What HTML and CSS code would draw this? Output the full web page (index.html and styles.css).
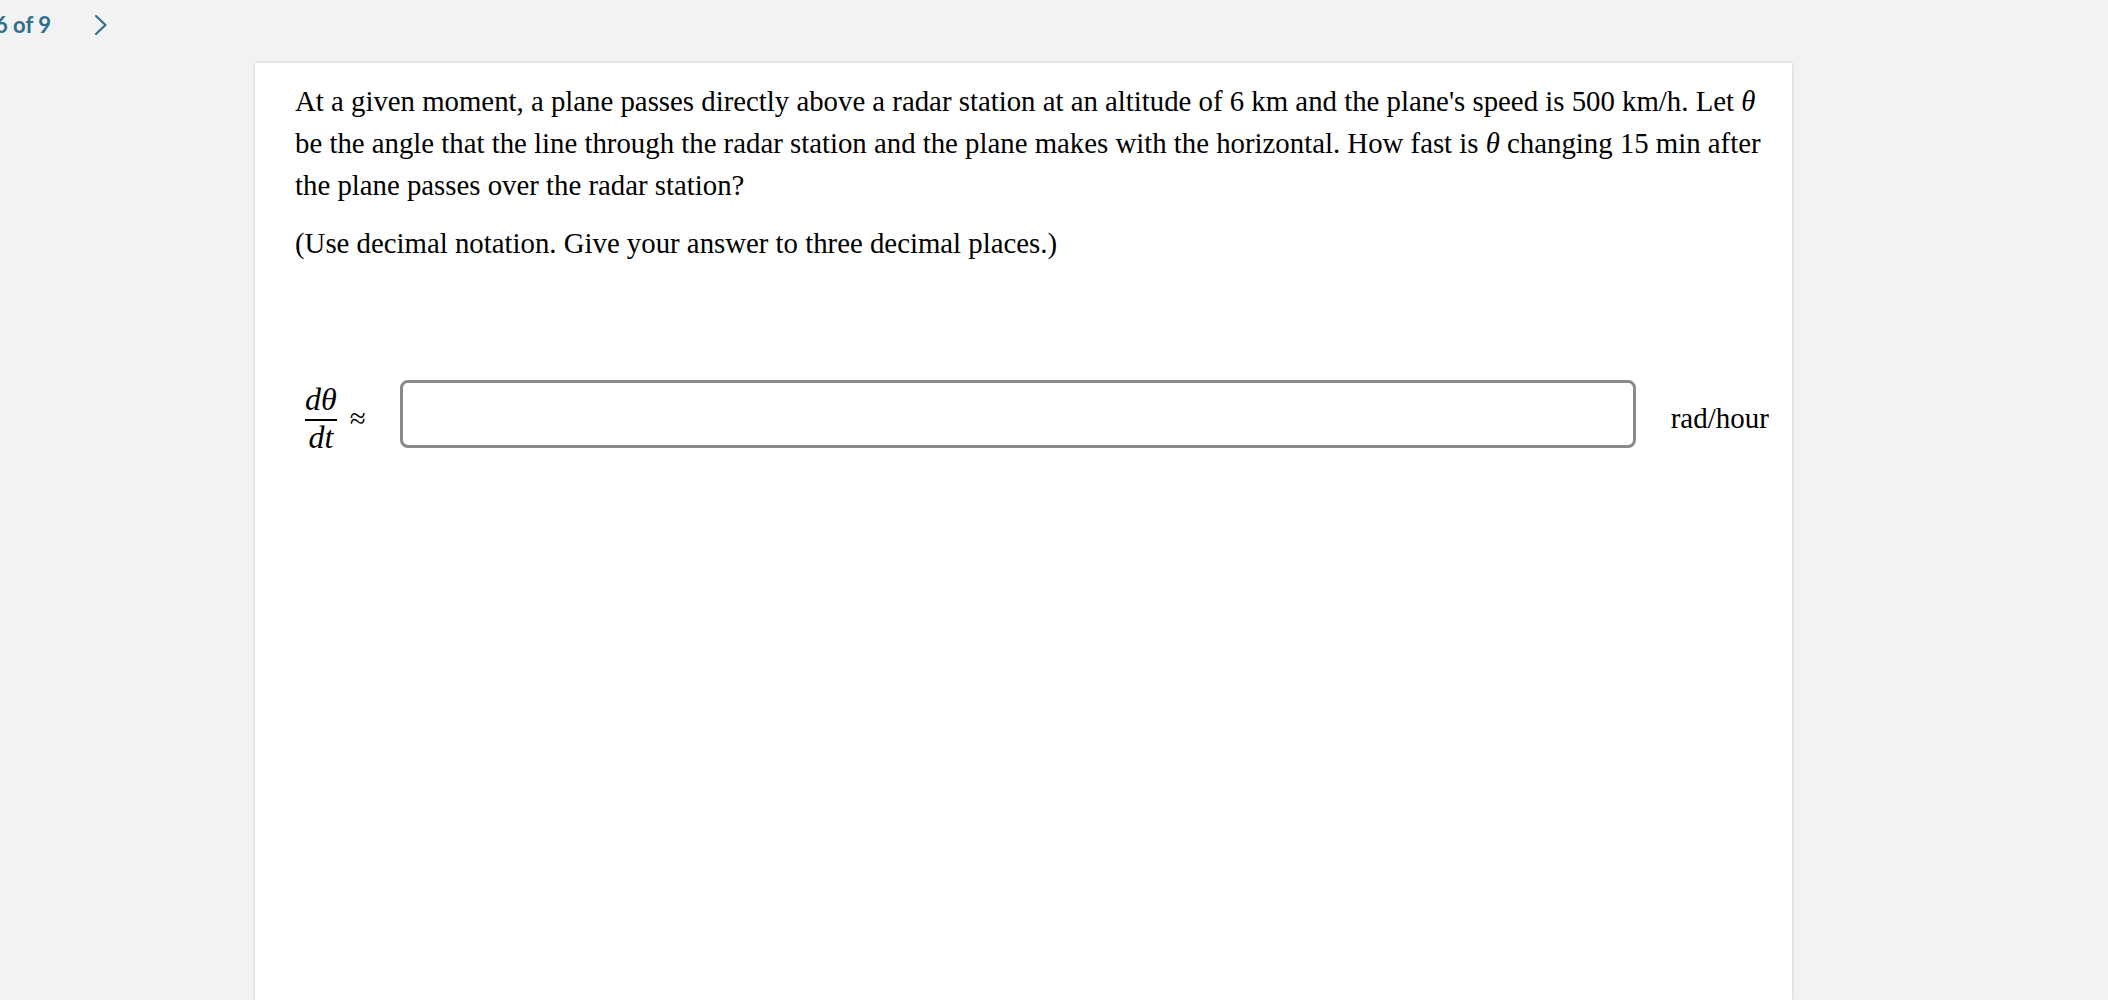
FILE: index.html
```html
<!DOCTYPE html>
<html lang="en">
<head>
<meta charset="utf-8">
<title>Question 6 of 9</title>
<link rel="stylesheet" href="styles.css">
</head>
<body>
<header class="topbar">
  <span class="counter">6 of 9</span>
  <button class="next" aria-label="Next question">
    <svg width="14" height="22" viewBox="0 0 14 22"><path d="M2 2 L11.5 11 L2 20" fill="none" stroke="#2e6f8c" stroke-width="2.2" stroke-linecap="round" stroke-linejoin="round"/></svg>
  </button>
</header>
<main class="card">
  <p class="question">At a given moment, a plane passes directly above a radar station at an altitude of 6 km and the plane's speed is 500 km/h. Let <i class="var">θ</i> be the angle that the line through the radar station and the plane makes with the horizontal. How fast is <i class="var">θ</i> changing 15 min after the plane passes over the radar station?</p>
  <p class="question">(Use decimal notation. Give your answer to three decimal places.)</p>
  <div class="answer-row">
    <span class="frac"><span class="num">dθ</span><span class="den">dt</span></span>
    <span class="approx">≈</span>
    <input class="answer" type="text" aria-label="answer">
    <span class="unit">rad/hour</span>
  </div>
</main>
</body>
</html>
```
FILE: styles.css
```css
html, body {
  margin: 0;
  padding: 0;
}
body {
  background: #f2f2f2;
  width: 2108px;
  height: 1000px;
  overflow: hidden;
}
.topbar {
  box-sizing: border-box;
  height: 63px;
  padding-top: 12px;
  display: flex;
  align-items: flex-start;
}
.counter {
  margin-left: -5px;
  font-family: "Lato", "Open Sans", sans-serif;
  font-weight: 700;
  font-size: 22px;
  line-height: 26px;
  color: #2e6f8c;
}
.next {
  margin-left: 43px;
  margin-top: 2px;
  padding: 0;
  border: 0;
  background: none;
  display: flex;
}
.card {
  box-sizing: border-box;
  margin-left: 255px;
  width: 1537px;
  height: 937px;
  background: #fff;
  box-shadow: 0 0 3px rgba(0, 0, 0, 0.18);
  padding: 17px 18px 0 40px;
  font-family: "Liberation Serif", "Times New Roman", serif;
  color: #000;
}
.question {
  margin: 0 0 16px;
  font-size: 28.8px;
  line-height: 42px;
}
.var {
  font-style: italic;
}
.answer-row {
  margin-top: 110px;
  display: flex;
  align-items: center;
  padding-left: 10px;
}
.frac {
  display: inline-flex;
  flex-direction: column;
  align-items: stretch;
  margin-top: 9px;
  font-style: italic;
  font-size: 32px;
  line-height: 32px;
  text-align: center;
}
.num {
  padding-bottom: 4px;
  border-bottom: 2px solid #000;
}
.den {
  padding-top: 0;
}
.approx {
  margin-left: 13px;
  margin-top: 10px;
  font-size: 29px;
}
.answer {
  box-sizing: border-box;
  flex-shrink: 0;
  margin-left: 34px;
  width: 1236px;
  height: 68px;
  border: 3px solid #8a8a8a;
  border-radius: 8px;
  background: #fff;
  outline: none;
  font-size: 28px;
}
.unit {
  margin-left: 35px;
  margin-top: 9px;
  font-size: 29px;
  line-height: 42px;
  white-space: nowrap;
}
```
